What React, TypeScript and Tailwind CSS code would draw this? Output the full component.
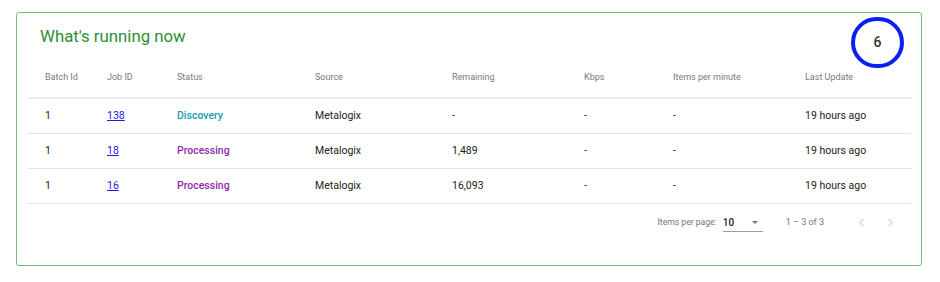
import { ChevronLeft, ChevronRight } from "lucide-react";

type Job = {
  batchId: number;
  jobId: number;
  status: "Discovery" | "Processing";
  source: string;
  remaining: string;
  kbps: string;
  itemsPerMinute: string;
  lastUpdate: string;
};

const jobs: Job[] = [
  { batchId: 1, jobId: 138, status: "Discovery", source: "Metalogix", remaining: "-", kbps: "-", itemsPerMinute: "-", lastUpdate: "19 hours ago" },
  { batchId: 1, jobId: 18, status: "Processing", source: "Metalogix", remaining: "1,489", kbps: "-", itemsPerMinute: "-", lastUpdate: "19 hours ago" },
  { batchId: 1, jobId: 16, status: "Processing", source: "Metalogix", remaining: "16,093", kbps: "-", itemsPerMinute: "-", lastUpdate: "19 hours ago" },
];

const cols = "grid grid-cols-[79px_70px_138px_137px_132px_89px_132px_106px] items-center";

export default function App() {
  return (
    <div className="w-[940px] h-[282px] bg-white pt-[12px] pl-[16px] font-['Roboto',sans-serif]">
      {/* Card */}
      <div className="w-[906px] h-[254px] border border-[#74bf7a] rounded-[3px] px-[11px]">
        {/* Title + counter */}
        <div className="flex justify-between items-start h-[44px]">
          <h2 className="pl-[12px] pt-[11px] text-[16.8px] leading-[24px] text-[#2b8f33]">What's running now</h2>
          <div className="mt-[4px] mr-[6px] shrink-0 w-[53px] h-[51px] rounded-full border-[4px] border-[#0a1ff2] flex items-center justify-center text-[14px] font-medium text-[#333]">
            6
          </div>
        </div>

        {/* Table */}
        <div className="w-[883px]">
          <div className={`${cols} h-[42px] pt-[2px] border-b-2 border-[#ececec] text-[9px] text-[#7a7a7a]`}>
            <div className="pl-[17px]">Batch Id</div>
            <div>Job ID</div>
            <div>Status</div>
            <div>Source</div>
            <div>Remaining</div>
            <div>Kbps</div>
            <div>Items per minute</div>
            <div>Last Update</div>
          </div>

          {jobs.map((job) => (
            <div key={job.jobId} className={`${cols} h-[35px] border-b border-[#e3e3e3] text-[10.5px] text-[#222]`}>
              <div className="pl-[17px]">{job.batchId}</div>
              <div>
                <a href="#" className="text-[#1a1aee] underline">{job.jobId}</a>
              </div>
              <div className={job.status === "Discovery" ? "font-medium text-[#1b9aaa]" : "font-medium text-[#8e2aaf]"}>
                {job.status}
              </div>
              <div>{job.source}</div>
              <div>{job.remaining}</div>
              <div>{job.kbps}</div>
              <div>{job.itemsPerMinute}</div>
              <div>{job.lastUpdate}</div>
            </div>
          ))}

          {/* Paginator */}
          <div className="flex justify-end items-center h-[37px] pr-[11px] text-[9px] text-[#757575]">
            <span className="text-[8.6px]">Items per page:</span>
            <div className="ml-[6px] w-[40px] h-[18px] border-b border-[#9e9e9e] flex items-center justify-between mt-[1px]">
              <span className="text-[10px] font-medium text-[#222]">10</span>
              <span className="mr-[5px] w-0 h-0 border-l-[3.5px] border-r-[3.5px] border-t-[3.5px] border-l-transparent border-r-transparent border-t-[#757575]" />
            </div>
            <span className="ml-[23px] mr-[27px]">1 – 3 of 3</span>
            <button className="w-[20px] h-[20px] flex items-center justify-center text-[#ababab]">
              <ChevronLeft size={13} strokeWidth={1.7} />
            </button>
            <button className="ml-[9px] w-[20px] h-[20px] flex items-center justify-center text-[#ababab]">
              <ChevronRight size={13} strokeWidth={1.7} />
            </button>
          </div>
        </div>
      </div>
    </div>
  );
}
